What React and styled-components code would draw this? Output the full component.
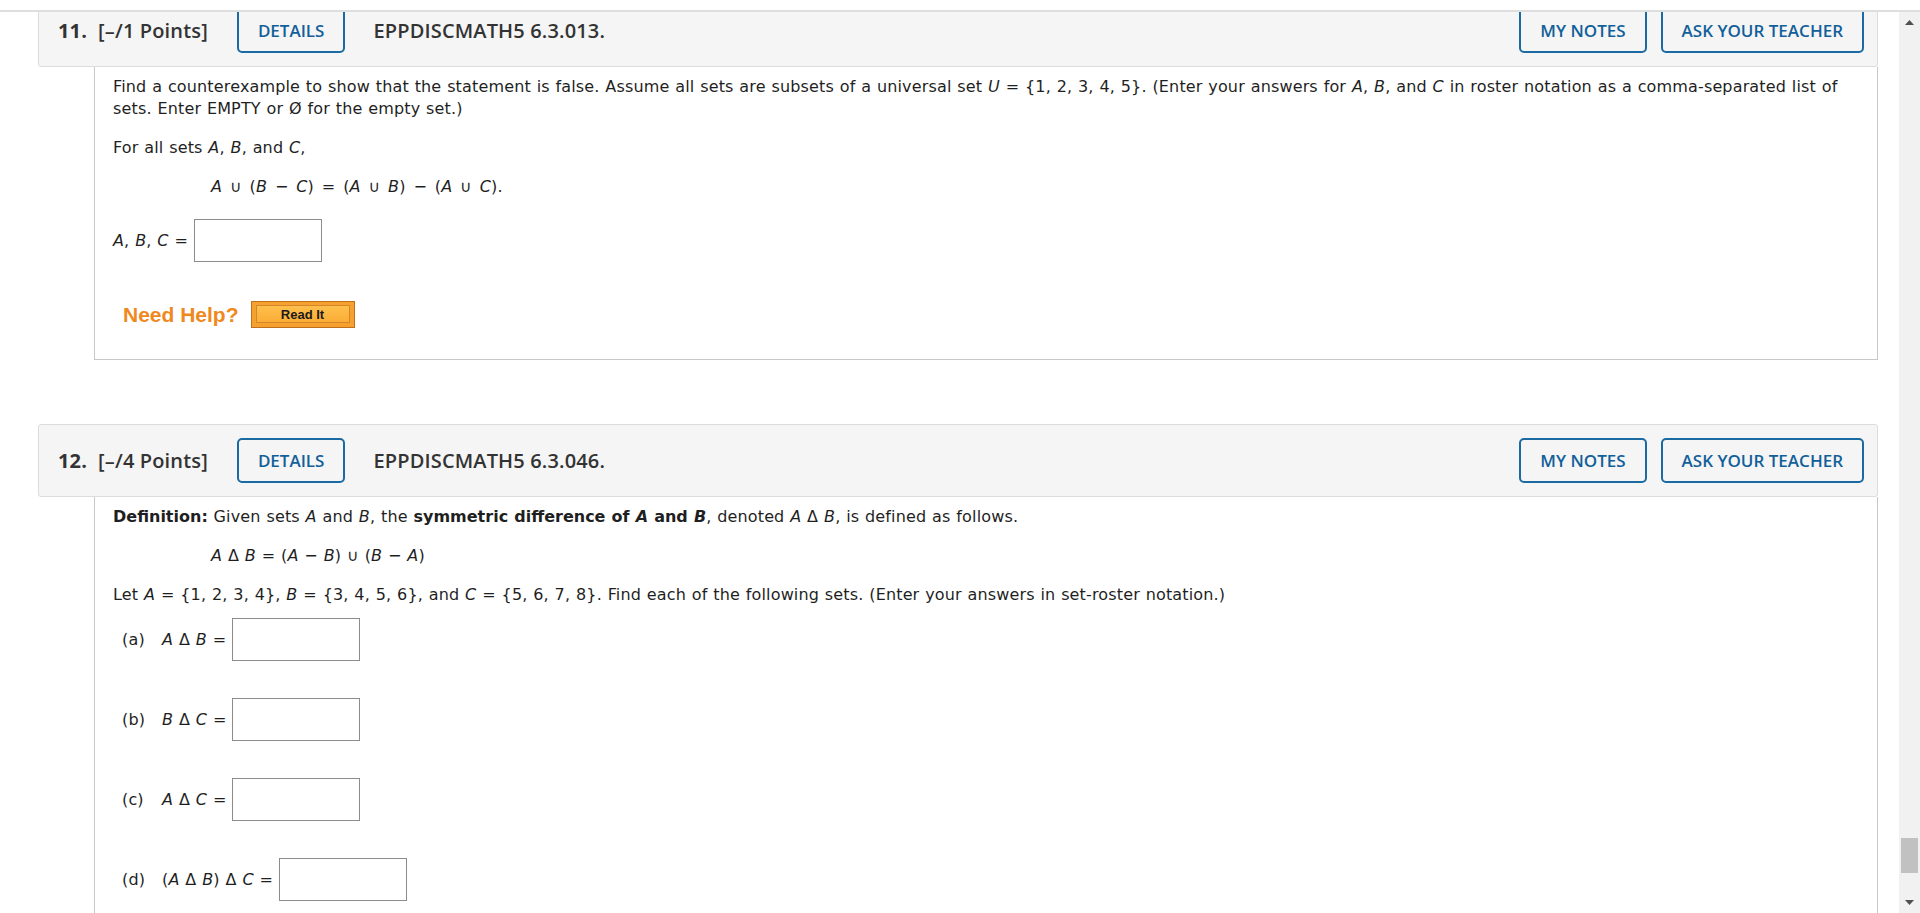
import React, { useLayoutEffect, useRef } from 'react';
import styled, { createGlobalStyle } from 'styled-components';

const GlobalStyle = createGlobalStyle`
  html, body {
    margin: 0;
    padding: 0;
    background: #fff;
    overflow: hidden;
  }
  body {
    font-family: "DejaVu Sans", Verdana, sans-serif;
  }
`;

const Page = styled.div`
  height: 913px;
  display: flex;
  flex-direction: column;
`;

const TopStrip = styled.div`
  height: 10px;
  flex-shrink: 0;
  border-bottom: 2px solid #dedede;
`;

const Main = styled.div`
  flex: 1;
  min-height: 0;
  display: flex;
`;

const Scroller = styled.div`
  flex: 1;
  overflow: hidden;
`;

const QuestionList = styled.div`
  display: flex;
  flex-direction: column;
  gap: 64px;
  padding: 0 21px 60px 38px;
`;

const Header = styled.div`
  height: 73px;
  box-sizing: border-box;
  display: flex;
  align-items: center;
  background: #f5f5f5;
  border: 1px solid #dcdcdc;
  border-radius: 3px;
  padding: 0 13px 0 19px;
  font-family: "Open Sans", "Liberation Sans", sans-serif;
  color: #333;
  letter-spacing: 0.15px;
`;

const Num = styled.span`
  font-size: 20px;
  font-weight: 700;
`;

const Points = styled.span`
  font-size: 20px;
  font-weight: 600;
  margin-left: 11px;
`;

const Title = styled.span`
  font-size: 20px;
  font-weight: 600;
  margin-left: 28px;
`;

const Spacer = styled.div`
  flex: 1;
`;

const ButtonGroup = styled.div`
  display: flex;
  gap: 14px;
`;

const OutlineButton = styled.button`
  height: 45px;
  box-sizing: border-box;
  padding: 0 19px;
  border: 2px solid #1b6aa2;
  border-radius: 5px;
  background: transparent;
  color: #12609a;
  font-family: "Open Sans", "Liberation Sans", sans-serif;
  font-size: 17px;
  font-weight: 600;
  margin-left: ${p => p.$ml || 0}px;
  cursor: pointer;
`;

const Body = styled.div`
  margin-left: 56px;
  border: 1px solid #c8c8c8;
  border-top: none;
  padding: 9px 18px ${p => p.$pb || 31}px;
  font-family: "DejaVu Sans", Verdana, sans-serif;
  font-size: 16px;
  line-height: 22px;
  letter-spacing: 0.15px;
  word-spacing: 0.55px;
  color: #1f1f1f;
`;

const Para = styled.p`
  margin: ${p => (p.$mt === undefined ? 17 : p.$mt)}px 0 0;
  padding-left: ${p => p.$indent || 0}px;
`;

const Strong = styled.b`
  font-weight: 700;
  letter-spacing: 0;
`;

const V = styled.i`
  font-style: italic;
`;

const Op = styled.span`
  padding: 0 ${p => p.$pad || 0}px;
`;

const AnswerRow = styled.div`
  display: flex;
  align-items: center;
  gap: 6px;
  margin-top: ${p => p.$mt || 0}px;
`;

const AnswerBox = styled.input`
  width: 128px;
  height: 43px;
  box-sizing: border-box;
  border: 1px solid #8c8c8c;
  margin: 0;
  padding: 0 6px;
  font: inherit;
`;

const PartList = styled.div`
  display: flex;
  flex-direction: column;
  gap: 37px;
  margin-top: 12px;
  padding-left: 9px;
`;

const PartLetter = styled.span`
  width: 34px;
`;

const HelpRow = styled.div`
  display: flex;
  align-items: center;
  gap: 12px;
  margin-top: 39px;
  padding-left: 10px;
`;

const NeedHelp = styled.span`
  font-family: "Liberation Sans", Arial, sans-serif;
  font-weight: 700;
  font-size: 21px;
  line-height: 24px;
  letter-spacing: 0;
  word-spacing: 0;
  color: #f0891d;
`;

const ReadIt = styled.button`
  width: 104px;
  height: 27px;
  box-sizing: border-box;
  padding: 3px 4px 4px;
  border: 1px solid #c0701c;
  background: #f6a12f;
  cursor: pointer;
`;

const ReadItInner = styled.span`
  display: flex;
  align-items: center;
  justify-content: center;
  height: 100%;
  box-sizing: border-box;
  border: 1px solid #d4862a;
  background: linear-gradient(#fdbf4c, #fbad36);
  font-family: "Liberation Sans", Arial, sans-serif;
  font-weight: 700;
  font-size: 13px;
  color: #1a1a1a;
`;

const ScrollBar = styled.div`
  width: 21px;
  flex-shrink: 0;
  background: #f1f1f1;
  display: flex;
  flex-direction: column;
`;

const ArrowButton = styled.div`
  height: 21px;
  display: flex;
  align-items: center;
  justify-content: center;
`;

const Track = styled.div`
  flex: 1;
  display: flex;
  flex-direction: column;
  justify-content: flex-end;
  align-items: center;
`;

const Thumb = styled.div`
  width: 17px;
  height: 35px;
  background: #c1c1c1;
  margin-bottom: 19px;
`;

const Arrow = ({ down }) => (
  <svg width="9" height="5" viewBox="0 0 9 5">
    <path d={down ? 'M0 0 H9 L4.5 5 Z' : 'M0 5 H9 L4.5 0 Z'} fill="#505050" />
  </svg>
);

const QuestionHeader = ({ num, points, code }) => (
  <Header>
    <Num>{num}.</Num>
    <Points>[–/{points} Points]</Points>
    <OutlineButton $ml={29}>DETAILS</OutlineButton>
    <Title>{code}</Title>
    <Spacer />
    <ButtonGroup>
      <OutlineButton>MY NOTES</OutlineButton>
      <OutlineButton>ASK YOUR TEACHER</OutlineButton>
    </ButtonGroup>
  </Header>
);

const parts = [
  { letter: 'a', expr: <><V>A</V> Δ <V>B</V> =</> },
  { letter: 'b', expr: <><V>B</V> Δ <V>C</V> =</> },
  { letter: 'c', expr: <><V>A</V> Δ <V>C</V> =</> },
  { letter: 'd', expr: <>(<V>A</V> Δ <V>B</V>) Δ <V>C</V> =</> },
];

const App = () => {
  const scrollRef = useRef(null);

  useLayoutEffect(() => {
    if (scrollRef.current) scrollRef.current.scrollTop = 18;
  }, []);

  return (
    <>
      <GlobalStyle />
      <Page>
        <TopStrip />
        <Main>
          <Scroller ref={scrollRef}>
            <QuestionList>
              <section>
                <QuestionHeader num={11} points={1} code="EPPDISCMATH5 6.3.013." />
                <Body>
                  <Para $mt={0}>
                    Find a counterexample to show that the statement is false. Assume all sets are subsets of a universal set <V>U</V> = {'{'}1, 2, 3, 4, 5{'}'}. (Enter your answers for <V>A</V>, <V>B</V>, and <V>C</V> in roster notation as a comma-separated list of sets. Enter EMPTY or Ø for the empty set.)
                  </Para>
                  <Para>
                    For all sets <V>A</V>, <V>B</V>, and <V>C</V>,
                  </Para>
                  <Para $indent={98}>
                    <V>A</V> <Op $pad={2}>∪</Op> (<V>B</V> <Op $pad={2}>−</Op> <V>C</V>) <Op $pad={2}>=</Op> (<V>A</V> <Op $pad={2}>∪</Op> <V>B</V>) <Op $pad={2}>−</Op> (<V>A</V> <Op $pad={2}>∪</Op> <V>C</V>).
                  </Para>
                  <AnswerRow $mt={21}>
                    <span><V>A</V>, <V>B</V>, <V>C</V> =</span>
                    <AnswerBox type="text" />
                  </AnswerRow>
                  <HelpRow>
                    <NeedHelp>Need Help?</NeedHelp>
                    <ReadIt>
                      <ReadItInner>Read It</ReadItInner>
                    </ReadIt>
                  </HelpRow>
                </Body>
              </section>

              <section>
                <QuestionHeader num={12} points={4} code="EPPDISCMATH5 6.3.046." />
                <Body $pb={40}>
                  <Para $mt={0}>
                    <Strong>Definition:</Strong> Given sets <V>A</V> and <V>B</V>, the <Strong>symmetric difference of <V>A</V> and <V>B</V></Strong>, denoted <V>A</V> Δ <V>B</V>, is defined as follows.
                  </Para>
                  <Para $indent={98}>
                    <V>A</V> Δ <V>B</V> = (<V>A</V> − <V>B</V>) ∪ (<V>B</V> − <V>A</V>)
                  </Para>
                  <Para>
                    Let <V>A</V> = {'{'}1, 2, 3, 4{'}'}, <V>B</V> = {'{'}3, 4, 5, 6{'}'}, and <V>C</V> = {'{'}5, 6, 7, 8{'}'}. Find each of the following sets. (Enter your answers in set-roster notation.)
                  </Para>
                  <PartList>
                    {parts.map(p => (
                      <AnswerRow key={p.letter}>
                        <PartLetter>({p.letter})</PartLetter>
                        <span>{p.expr}</span>
                        <AnswerBox type="text" />
                      </AnswerRow>
                    ))}
                  </PartList>
                </Body>
              </section>
            </QuestionList>
          </Scroller>
          <ScrollBar>
            <ArrowButton><Arrow /></ArrowButton>
            <Track>
              <Thumb />
            </Track>
            <ArrowButton><Arrow down /></ArrowButton>
          </ScrollBar>
        </Main>
      </Page>
    </>
  );
};

export default App;
